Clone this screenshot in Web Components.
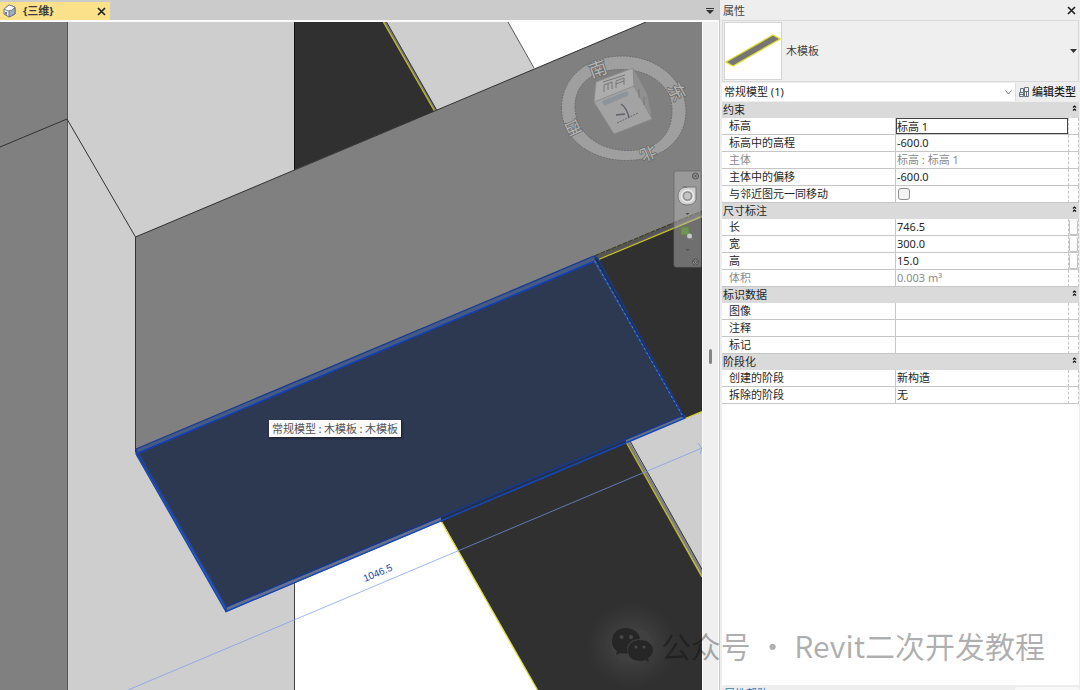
<!DOCTYPE html>
<html lang="zh-CN">
<head>
<meta charset="utf-8">
<title>{三维}</title>
<style>
html,body{height:100%;margin:0;overflow:hidden}
body{font:11px/16px "Noto Sans","Noto Sans CJK SC",sans-serif;color:#262626;background:#cbcbcb}
</style>
</head>
<body>
<app-window>
  <view-tabs slot="tabs" label="{三维}"></view-tabs>
  <model-view slot="canvas">
    <hover-tip>常规模型 : 木模板 : 木模板</hover-tip>
  </model-view>
  <properties-panel slot="panel"></properties-panel>
  <water-mark slot="mark">公众号 · Revit二次开发教程</water-mark>
</app-window>
<script>
function define(name, html, init) {
  const tpl = document.createElement('template');
  tpl.innerHTML = html;
  customElements.define(name, class extends HTMLElement {
    constructor() {
      super();
      this.attachShadow({mode: 'open'}).append(tpl.content.cloneNode(true));
      if (init) init(this, this.shadowRoot);
    }
  });
}

define('app-window', `
<style>
:host{display:flex;height:100vh;position:relative}
.work{flex:1;min-width:0;display:flex;flex-direction:column}
.row{flex:1;min-height:0;display:flex}
.gutter{flex:none;width:15px;background:#efefef;border:solid #fafafa;border-width:0 1px;display:flex;align-items:center;justify-content:center}
.grip{width:3px;height:15px;border-radius:2px;background:#858585}
</style>
<div class="work">
  <slot name="tabs"></slot>
  <div class="row"><slot name="canvas"></slot><div class="gutter"><div class="grip"></div></div></div>
</div>
<slot name="panel"></slot>
<slot name="mark"></slot>`);

define('view-tabs', `
<style>
:host{display:flex;justify-content:space-between;align-items:center;box-sizing:border-box;height:22px;background:#cbcbcb;border-bottom:2px solid #fbfbfb;padding-top:2px}
.tab{display:flex;align-items:center;width:110px;height:18px;box-sizing:border-box;padding:0 4px 0 3px;background:#fce18b;font-weight:700;color:#3c3c3c}
.name{flex:1;padding-left:7px}
button{all:unset;display:flex;align-items:center}
.more{padding-right:5px}
svg{display:block}
</style>
<div class="tab" role="tab">
<svg width="13" height="14" viewBox="0 0 13 14"><path d="M1 5 6 1 12 3 12 10 6 13 1 10Z" fill="#eef1f6" stroke="#6a7280"/><path d="M6 7 12 4V10L6 13Z" fill="#a3adbd" stroke="#6a7280"/><path d="M1 5 6 1 12 3 9 6 5 7Z" fill="#fff" stroke="#7c8490"/><path d="M2 8H4V11L2 10Z" fill="#707a89"/></svg>
<span class="name"></span>
<button aria-label="关闭"><svg width="9" height="9" viewBox="0 0 9 9"><path d="M1 1 8 8M8 1 1 8" stroke="#222" stroke-width="1.700"/></svg></button>
</div>
<button class="more" aria-label="更多"><svg width="8" height="6" viewBox="0 0 8 6"><path d="M0 .5H8" stroke="#333"/><path d="M0 2H8L4 6Z" fill="#333"/></svg></button>`,
(host, root) => { root.querySelector('.name').textContent = host.getAttribute('label'); });

define('model-view', `
<style>
:host{display:block;position:relative;flex:1;min-width:0;overflow:hidden}
svg{display:block;width:100%;height:100%}
text{font-family:"Noto Sans CJK SC",sans-serif}
.dim{font:10px "Liberation Sans",sans-serif}
.face{paint-order:stroke}
</style>
<svg viewBox="0 22 702 668" preserveAspectRatio="xMinYMin slice">
  <rect y="22" width="702" height="668" fill="#cecece"/>
  <path d="M0 22H67V690H0Z" fill="#808080"/>
  <path d="M67.500 22V690" stroke="#555"/>
  <path d="M0 147 67 119 135.500 237" fill="none" stroke="#333"/>
  <!-- upper openings -->
  <path d="M294 22H383L435 111 294 170Z" fill="#303030"/>
  <path d="M294.500 22V170" stroke="#111"/>
  <path d="M384.500 22 435.500 110" stroke="#777" stroke-width="3"/>
  <path d="M386.500 22 436.500 110" stroke="#333"/>
  <path d="M383.500 22 434.500 111" stroke="#bdb82a" stroke-width="1.300"/>
  <path d="M508 22H646L534 69Z" fill="#fff"/>
  <path d="M508 22 534 68" stroke="#555"/>
  <!-- long side face -->
  <path d="M135 237 646 22H702V216L594 260 135 452Z" fill="#808080"/>
  <path d="M135.500 452V237L646 22" fill="none" stroke="#333"/>
  <!-- lower openings -->
  <path d="M294 580 440 518 540 690H294Z" fill="#fff"/>
  <path d="M294.500 580V690" stroke="#444"/>
  <path d="M440 518 626 440 702 577V690H537.500Z" fill="#303030"/>
  <path d="M440.500 520 537.500 690" stroke="#dad92a" stroke-width="1.300"/>
  <path d="M628 442 703 574" stroke="#808080" stroke-width="3"/>
  <path d="M630 441 703 571" stroke="#333"/>
  <path d="M626 442 702 577" stroke="#c0bd2b" stroke-width="1.300"/>
  <path d="M594 260 702 216V412L684 419Z" fill="#303030"/>
  <path d="M594 256 702 211V215L596 260Z" fill="#555"/>
  <path d="M594 256 702 211" stroke="#353525"/>
  <path d="M594 256 702 211" stroke="#9b963a" stroke-dasharray="1 5"/>
  <path d="M596 260.500 702 216.500" stroke="#c8c329" stroke-width="1.300"/>
  <path d="M684 419 702 411.500" stroke="#dcd92c" stroke-width="1.300"/>
  <!-- selected board -->
  <path d="M136 449 594 256 598 258 685 418 683 419 226 612 136 454Z" fill="#455a85"/>
  <path d="M226 608 441 517V521L226 612Z" fill="#66718f"/>
  <path d="M441 517 626 440V444L441 522Z" fill="#22304e"/>
  <path d="M626 440 683 416V419L626 443Z" fill="#66718f"/>
  <path d="M594 258 598 258 685 418 682 417Z" fill="#22304e"/>
  <path d="M137 454 594 262 683 416 226 607Z" fill="#2d3851"/>
  <path d="M136 449 594 256 598 259 685 418M226 607 683 415M136 449V454M226 607V612" fill="none" stroke="#17398e" stroke-width="1.200"/>
  <path d="M137 453.500 594 261.500" stroke="#0f3fb5" stroke-width="1.500"/>
  <path d="M136 449 226 607M136 454 226 611.500 685 418V415" fill="none" stroke="#1749b4" stroke-width="1.400"/>
  <path d="M595 261 682 415" stroke="#1746ad" stroke-width="1.500"/>
  <path d="M595 261 682 415" stroke="#608ea8" stroke-dasharray="2 3"/>
  <!-- temporary dimension -->
  <path d="M128 690 702 448M698 443 702 448.500 700 454" fill="none" stroke="#7898ee" stroke-opacity=".7"/>
  <text class="dim" transform="translate(365 582) rotate(-23)" fill="#1c4bb5">1046.5</text>
  <!-- compass ring and view cube -->
  <path fill-rule="evenodd" d="M561.500 108C561.500 78 586 56 622 56S686 81 686 111 661 160.500 626 160.500 561.500 139 561.500 108ZM575 107C575 131 597 150.500 628 150.500S672 133 672 110 651 69.500 621 69.500 575 85 575 107Z" fill="#9f9f9f" stroke="#6e6e6e" stroke-dasharray="2 1"/>
  <path d="M596 82 633 68 634 86 594 102Z" fill="#adadad"/>
  <path d="M594 102 634 86 652 119 614 134Z" fill="#a3a3a3"/>
  <path d="M633 68 647 94 652 119 634 86Z" fill="#909090"/>
  <path d="M602 101 627 91 629 95 604 106Z" fill="#8f949b"/>
  <path d="M596 82 633 68 647 94 652 119 614 134 594 102ZM594 102 634 86 652 119M633 68 634 86" fill="none" stroke="#888" stroke-width=".7"/>
  <path d="M617 123 638 113" stroke="#686868" stroke-dasharray="2 1"/>
  <path d="M621 104Q627 108 629 118M616 115 625 114" fill="none" stroke="#5f626a" stroke-width="1.500"/>
  <path d="M604 92V85L612 82V89M608 90V83M616 88V81L624 78V85M616 84 624 81M603 82 625 75M639 89V98M644 97V105" fill="none" stroke="#777"/>
  <g class="face" font-size="18" text-anchor="middle" fill="#b4b4b4" stroke="#6a6a6a" stroke-width="1.500">
    <text transform="translate(600 75) rotate(-19)">南</text>
    <text transform="translate(671 95) rotate(62)">东</text>
    <text font-size="16" transform="translate(573 128) rotate(155) translate(0 6)">西</text>
    <text font-size="16" transform="translate(646 148) rotate(158)">北</text>
  </g>
  <!-- navigation bar -->
  <path d="M674 173Q674 171 676 171H701V267H676Q674 267 674 265Z" fill="#b4b4b4" fill-opacity=".48" stroke="#666" stroke-opacity=".7"/>
  <g fill="none" stroke="#4e4e4e">
    <circle cx="695.500" cy="176" r="3"/><path d="M694 174.500 697 177.500M697 174.500 694 177.500"/>
    <circle cx="695.500" cy="262" r="3" fill="#999"/><path d="M693.500 261H697.500L695.500 264Z"/>
  </g>
  <path d="M683 187H696V200Q694 205 687 205C681 205 678 201 678 196S681 187 687 187Z" fill="#cfcfcf" stroke="#777"/>
  <circle cx="687.500" cy="196" r="6" fill="#aaa" stroke="#eee" stroke-width="1.500"/>
  <circle cx="687.500" cy="196" r="4" fill="#c4c4c4" stroke="#888"/>
  <path d="M685.500 213H689.500L687.500 215ZM685.500 249H689.500L687.500 251Z" fill="#4d4d4d"/>
  <path d="M681 227H689V235H681Z" fill="#739457" stroke="#65804f"/>
  <circle cx="689.500" cy="236" r="2.500" fill="#c7c7c7"/><path d="M691 238 693 240" stroke="#888"/>
</svg>
<slot></slot>`);

define('hover-tip', `
<style>
:host{position:absolute;left:269px;top:398px;padding:0 2px;background:#fafafa;border:1px solid #fff;color:#545454;line-height:15px;white-space:nowrap;box-shadow:1px 1px 2px #111a;box-sizing:border-box;font-family:"Noto Sans CJK SC",sans-serif}
</style><slot></slot>`);

define('properties-panel', `
<style>
:host{display:flex;flex-direction:column;box-sizing:border-box;width:361px;flex:none;background:#eee;border-left:1px solid #c8c8c8;padding:0 1px 0 2px}
header{display:flex;align-items:center;justify-content:space-between;height:20px;padding:1px 3px 0 1px;box-sizing:border-box;flex:none;color:#444}
button{all:unset}
.family{display:flex;align-items:center;gap:4px;box-sizing:border-box;height:62px;flex:none;border:1px solid #d9d9d9;padding:0 1px;color:#444;background:#efefef}
.thumb{box-sizing:border-box;width:58px;height:58px;background:#fff;border:1px solid #d4d4d4}
.family span{flex:1}
svg{display:block}
.filter{display:flex;height:20px;flex:none;align-items:center}
.combo{flex:1;display:grid;align-items:center}
.combo>*{grid-area:1/1}
.combo svg{justify-self:end;margin-right:4px;pointer-events:none}
select{appearance:none;font:inherit;color:#262626;background:#fff;border:0;border-right:1px solid #ddd;border-radius:0;height:18px;padding:0 2px;width:100%}
.edit{display:flex;align-items:center;gap:2px;padding:0 3px;font-weight:500;color:#222;white-space:nowrap}
.body{flex:1;min-height:0;background:#fff}
footer{flex:none;height:5px;display:flex;justify-content:space-between;align-items:flex-start;overflow:hidden}
a{color:#3477bd;text-decoration:none;padding:1px 0 0 2px}
.apply{box-sizing:border-box;width:64px;height:20px;margin-top:2px;background:#f8f8f8;border-radius:3px}
</style>
<header><span>属性</span><button aria-label="关闭"><svg width="9" height="9" viewBox="0 0 9 9"><path d="M1 1 8 8M8 1 1 8" stroke="#222" stroke-width="1.700"/></svg></button></header>
<button class="family">
  <div class="thumb"><svg width="56" height="56" viewBox="0 0 56 56"><path d="M1 39 48 12 55 16 8 43Z" fill="#757575" stroke="#dedb27" stroke-width="1.300"/></svg></div>
  <span>木模板</span>
  <svg width="7" height="4" viewBox="0 0 7 4"><path d="M0 0H7L3.500 4Z" fill="#333"/></svg>
</button>
<div class="filter">
  <div class="combo"><select aria-label="类别"><option>常规模型 (1)</option></select><svg width="7" height="5" viewBox="0 0 7 5"><path d="M.5 .5 3.500 4 6.500 .5" fill="none" stroke="#777"/></svg></div>
  <button class="edit"><svg width="11" height="11" viewBox="0 0 11 11"><g fill="none" stroke="#66717f"><path d="M1.500 1.500H4.500V5.500H.5V9.500H4.500V5.500M5.500 .5H9.500V9.500H5.500ZM5.500 4.500H9.500M.5 7.500H4.500M1.500 1.500V5.500M7.500 4.500V9.500"/></g></svg><span>编辑类型</span></button>
</div>
<div class="body"><property-grid></property-grid></div>
<footer><a href="#help">属性帮助</a><button class="apply" aria-label="应用"></button></footer>`);

const GROUPS = [
  ['约束', [
    {name: '标高', value: '标高 1', kind: 'input'},
    {name: '标高中的高程', value: '-600.0'},
    {name: '主体', value: '标高 : 标高 1', off: true},
    {name: '主体中的偏移', value: '-600.0'},
    {name: '与邻近图元一同移动', kind: 'check'}]],
  ['尺寸标注', [
    {name: '长', value: '746.5', link: true},
    {name: '宽', value: '300.0', link: true},
    {name: '高', value: '15.0', link: true},
    {name: '体积', value: '0.003 m³', off: true}]],
  ['标识数据', [{name: '图像'}, {name: '注释'}, {name: '标记'}]],
  ['阶段化', [{name: '创建的阶段', value: '新构造'}, {name: '拆除的阶段', value: '无'}]]
];

define('property-grid', `
<style>
:host{display:block}
table{width:100%;table-layout:fixed;border-collapse:separate;border-spacing:0}
.n{width:174px}.x{width:11px}
th,td{height:17px;box-sizing:border-box;padding:0;text-align:left;font-weight:400;line-height:16px;border-bottom:1px solid #c6c6c6;white-space:nowrap}
tbody th[scope=row]{padding-left:7px;border-right:1px solid #c6c6c6}
td+td{border-left:1px dashed #c6c6c6;border-right:1px dashed #c6c6c6}
td{padding-left:1px}
td.edit,td+td{padding:0}
.off>*{color:#8b8b8b}
.head th{height:16px;line-height:16px;background:#dadada;border-bottom:0;padding:0 2px 0 1px}
.head div{display:flex;justify-content:space-between;align-items:flex-start;height:16px}
.head button{all:unset;display:block;padding-top:3px}
svg{display:block}
input[type=text]{display:block;box-sizing:border-box;width:100%;height:16px;padding:0;border:1px solid #444;border-radius:0;background:#fff;font:inherit;line-height:14px;color:inherit;outline:0}
input[type=checkbox]{appearance:none;display:block;margin:0 0 0 1px;width:12px;height:12px;box-sizing:border-box;border:1px solid #8d8d8d;border-radius:3px;background:#f4f4f4}
.link{all:unset;display:block;box-sizing:border-box;width:9px;height:15px;border:1px solid #c2c2c2;border-top:0;border-radius:2px;background:#fdfdfd}
</style>
<table><colgroup><col class="n"><col><col class="x"></colgroup></table>`,
(host, root) => {
  const table = root.querySelector('table');
  GROUPS.forEach(([title, rows], g) => {
    const body = document.createElement('tbody');
    body.innerHTML = `<tr class="head"><th colspan="3" scope="rowgroup"><div><span>${title}</span><button aria-label="折叠"><svg width="5" height="6" viewBox="0 0 5 6"><path d="M1 2.500 2.500 1 4 2.500M1 5.500 2.500 4 4 5.500" fill="none" stroke="#111" stroke-width="1.200"/></svg></button></div></th></tr>` +
      rows.map((r, i) => {
        const id = `p${g}-${i}`;
        const cell = r.kind === 'input' ? `<input type="text" id="${id}" value="${r.value}">`
          : r.kind === 'check' ? `<input type="checkbox" id="${id}">` : (r.value || '');
        const name = r.kind ? `<label for="${id}">${r.name}</label>` : r.name;
        const link = r.link ? `<button class="link" aria-label="关联${r.name}"></button>` : '';
        return `<tr class="${r.off ? 'off' : ''}"><th scope="row">${name}</th><td class="${r.kind === 'input' ? 'edit' : ''}">${cell}</td><td>${link}</td></tr>`;
      }).join('');
    table.append(body);
  });
});

define('water-mark', `
<style>
:host{position:absolute;right:35px;bottom:23px;display:flex;align-items:center;gap:8px;pointer-events:none;font:30px/44px "Noto Sans CJK SC",sans-serif;color:rgba(0,0,0,.32);white-space:nowrap}
.logo{border-radius:50%;background:rgba(255,255,255,.08);box-shadow:0 0 22px 12px rgba(255,255,255,.08)}
svg{display:block}
</style>
<div class="logo"><svg width="42" height="36" viewBox="0 0 42 36">
<path d="M15 1C6 1 1 7 1 14 1 19 3 22 6 24L5 28 10 26Q13 27 17 26C14 18 20 12 29 12 28 5 22 1 15 1Z" fill="#262626"/>
<path d="M29 13C22 13 17 17 17 23.500S22 34 29 34Q32 34 34 33L38 35 37 31C40 29 42 27 42 23.500 42 17 36 13 29 13Z" fill="#262626"/>
<g fill="#484848"><circle cx="10.500" cy="10" r="2"/><circle cx="20" cy="10" r="2"/><circle cx="25" cy="20" r="1.500"/><circle cx="33" cy="20" r="1.500"/></g></svg></div>
<span><slot></slot></span>`);
</script>
</body>
</html>
